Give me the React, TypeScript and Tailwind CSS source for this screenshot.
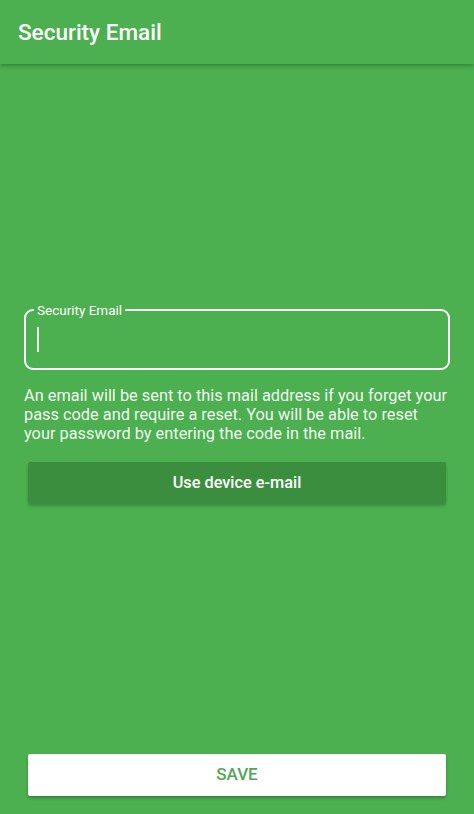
export default function App() {
  return (
    <div className="flex flex-col h-[814px] bg-[#4caf50] font-['Roboto',sans-serif] text-white">
      {/* app bar */}
      <header className="h-16 shrink-0 flex items-center pl-[18px] pt-[2px] bg-[#4caf50] shadow-[0_2px_4px_rgba(0,0,0,0.25)] z-10">
        <h1 className="text-[22.5px] font-medium">Security Email</h1>
      </header>

      <main className="flex-1 flex flex-col px-6 pt-[238px] pb-[18px]">
        <fieldset className="border-[2.5px] border-white rounded-[9px] h-[68px] px-[11px] m-0">
          <legend className="ml-[-3px] px-[3px] text-[13.5px] leading-4 text-white">Security Email</legend>
          <div className="h-[50px] pt-[9px]">
            <span className="block w-[2px] h-[25px] bg-white/90" />
          </div>
        </fieldset>

        <p className="mt-4 text-[16.35px] leading-[19px] text-white/95">
          An email will be sent to this mail address if you forget your pass code and require a reset. You will be able to reset your password by entering the code in the mail.
        </p>

        <button className="mt-[19px] mx-1 h-[42px] rounded-[2px] bg-[#3a8e3d] text-[16.3px] font-medium text-white shadow-[0_2px_3px_rgba(0,0,0,0.2)]">
          Use device e-mail
        </button>

        <button className="mt-auto mx-1 h-[42px] rounded-[2px] bg-white text-[17px] font-medium text-[#55a558] shadow-[0_2px_3px_rgba(0,0,0,0.25)]">
          SAVE
        </button>
      </main>
    </div>
  );
}
